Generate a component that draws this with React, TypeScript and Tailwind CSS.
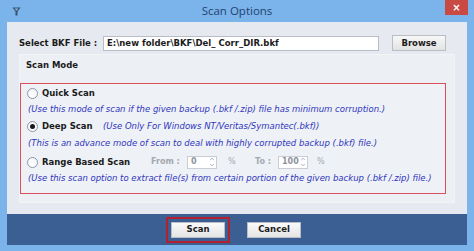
import { ChevronUp, ChevronDown } from "lucide-react";

const verdana = { fontFamily: '"DejaVu Sans", Verdana, sans-serif' };

function Radio({ checked }: { checked?: boolean }) {
  return (
    <span className="flex h-[11px] w-[11px] items-center justify-center rounded-full border border-[#8a96a8] bg-gradient-to-b from-[#f4f6f9] to-[#ffffff]">
      {checked && <span className="h-[5px] w-[5px] rounded-full bg-[#1a1a1a]" />}
    </span>
  );
}

function Spinner({ value }: { value: string }) {
  return (
    <div className="flex h-[13px] w-[30px] items-center justify-between border border-[#c9ced6] bg-white pl-[3px] pr-[1px]">
      <span className="text-[8px] font-bold text-[#8d939c]">{value}</span>
      <span className="flex flex-col leading-none text-[#8d939c]">
        <ChevronUp size={6} strokeWidth={3} />
        <ChevronDown size={6} strokeWidth={3} />
      </span>
    </div>
  );
}

function Logo() {
  return (
    <svg width="9" height="9" viewBox="0 0 9 9" className="absolute left-[12px] top-[7px]">
      <path d="M0.5 0.5 L8.5 0.5 L5.5 4.5 L5.5 8.5 L3.5 8.5 L3.5 4.5 Z" fill="#34506f" />
      <path d="M2.5 1.5 L6.5 1.5 L4.5 3.8 Z" fill="#8fb9e4" />
    </svg>
  );
}

export default function App() {
  return (
    <div
      className="flex h-[251px] w-[474px] flex-col bg-[#7ab4ea] text-[8.5px]"
      style={verdana}
    >
      {/* title bar */}
      <div className="relative flex h-[22px] items-center justify-center">
        <Logo />
        <span
          className="text-[11.5px] text-[#24426f]"
          style={{ fontFamily: '"Open Sans", "Noto Sans", sans-serif' }}
        >
          Scan Options
        </span>
        <div className="absolute right-[6px] top-0 flex h-[15px] w-[23px] items-center justify-center bg-[#c94a43] text-[10px] font-bold leading-none text-white">
          ×
        </div>
      </div>

      {/* body */}
      <div className="mx-[7px] flex h-[192px] flex-col bg-[#e6e9ef] px-[12px] pt-[13px]">
        <div className="flex h-[16px] items-center">
          <span className="w-[84px] font-bold text-[#1b1b1b]">Select BKF File :</span>
          <div className="flex h-[15px] w-[276px] items-center border border-[#b9bec6] bg-white px-[3px] font-bold text-[#1b1b1b]">
            E:\new folder\BKF\Del_ Corr_DIR.bkf
          </div>
          <button className="ml-[13px] h-[16px] w-[54px] border border-[#b9bec6] bg-gradient-to-b from-[#f7f7f7] to-[#e3e3e3] font-bold text-[#1b1b1b]">
            Browse
          </button>
        </div>

        <div className="mt-[3px] flex h-[149px] w-[436px] flex-col border border-[#f2f4f7] bg-[#eceff4]">
          <div className="pl-[6px] pt-[4px] font-bold text-[#1b1b1b]">Scan Mode</div>
          <div className="mt-[11px] flex h-[111px] w-[426px] flex-col border border-[#d9505c] bg-[#eef1f5] pl-[6px] pt-[4px] italic text-[#2e35bd]">
            <div className="flex h-[12px] items-center gap-[4px] not-italic">
              <Radio />
              <span className="font-bold text-[#1b1b1b]">Quick Scan</span>
            </div>
            <div className="mt-[3px] h-[12px] pl-[1px] leading-[12px]">
              (Use this mode of scan if the given backup (.bkf /.zip) file has minimum corruption.)
            </div>
            <div className="mt-[6px] flex h-[12px] items-center gap-[4px]">
              <Radio checked />
              <span className="w-[57px] font-bold not-italic text-[#1b1b1b]">Deep Scan</span>
              <span>(Use Only For Windows NT/Veritas/Symantec(.bkf))</span>
            </div>
            <div className="mt-[4px] h-[12px] pl-[1px] leading-[12px]">
              (This is an advance mode of scan to deal with highly corrupted backup (.bkf) file.)
            </div>
            <div className="mt-[7px] flex h-[13px] items-center not-italic">
              <Radio />
              <span className="ml-[4px] w-[109px] font-bold text-[#1b1b1b]">Range Based Scan</span>
              <span className="w-[36px] text-[8px] font-bold text-[#a3a8b0]">From :</span>
              <Spinner value="0" />
              <span className="ml-[11px] w-[27px] text-[8px] text-[#a3a8b0]">%</span>
              <span className="w-[23px] text-[8px] font-bold text-[#a3a8b0]">To :</span>
              <Spinner value="100" />
              <span className="ml-[9px] text-[8px] text-[#a3a8b0]">%</span>
            </div>
            <div className="mt-[3px] h-[12px] pl-[1px] leading-[12px]">
              (Use this scan option to extract file(s) from certain portion of the given backup (.bkf /.zip) file.)
            </div>
          </div>
        </div>
      </div>

      {/* footer */}
      <div className="mx-[7px] flex h-[31px] items-center gap-[17px] bg-[#3b5f92] pl-[159px]">
        <div className="flex h-[26px] w-[64px] items-center justify-center border-2 border-[#b3202e]">
          <button className="h-[16px] w-[54px] border border-[#b9bec6] bg-gradient-to-b from-[#fafafa] to-[#e4e4e4] font-bold text-[#1b1b1b]">
            Scan
          </button>
        </div>
        <button className="h-[16px] w-[54px] border border-[#b9bec6] bg-gradient-to-b from-[#fafafa] to-[#e4e4e4] font-bold text-[#1b1b1b]">
          Cancel
        </button>
      </div>
    </div>
  );
}
